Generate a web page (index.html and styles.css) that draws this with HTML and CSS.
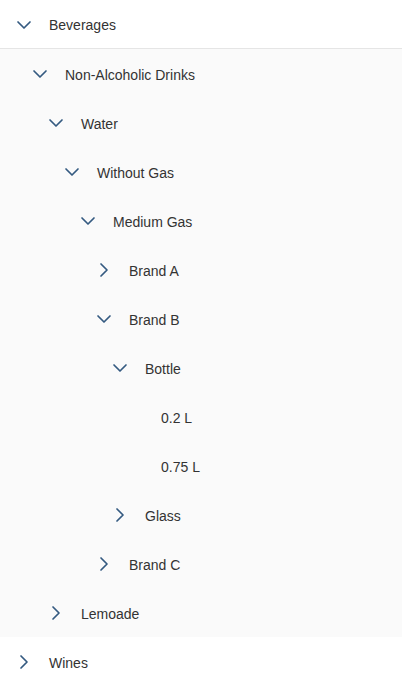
FILE: index.html
```html
<!DOCTYPE html>
<html lang="en">
<head>
    <meta charset="UTF-8">
    <meta name="viewport" content="width=device-width, initial-scale=1.0">
    <title>Tree</title>
    <link rel="stylesheet" href="styles.css">
</head>
<body>
    <ul class="tree">
        <li class="node">
            <div class="row lvl-0"><svg class="chev" viewBox="0 0 16 16"><path d="M2 5 L8 11 L14 5"/></svg><span class="label">Beverages</span></div>
            <ul class="children">
                <li><div class="row lvl-1"><svg class="chev" viewBox="0 0 16 16"><path d="M2 5 L8 11 L14 5"/></svg><span class="label">Non-Alcoholic Drinks</span></div></li>
                <li><div class="row lvl-2"><svg class="chev" viewBox="0 0 16 16"><path d="M2 5 L8 11 L14 5"/></svg><span class="label">Water</span></div></li>
                <li><div class="row lvl-3"><svg class="chev" viewBox="0 0 16 16"><path d="M2 5 L8 11 L14 5"/></svg><span class="label">Without Gas</span></div></li>
                <li><div class="row lvl-4"><svg class="chev" viewBox="0 0 16 16"><path d="M2 5 L8 11 L14 5"/></svg><span class="label">Medium Gas</span></div></li>
                <li><div class="row lvl-5"><svg class="chev" viewBox="0 0 16 16"><path d="M5 2 L11 8 L5 14"/></svg><span class="label">Brand A</span></div></li>
                <li><div class="row lvl-5"><svg class="chev" viewBox="0 0 16 16"><path d="M2 5 L8 11 L14 5"/></svg><span class="label">Brand B</span></div></li>
                <li><div class="row lvl-6"><svg class="chev" viewBox="0 0 16 16"><path d="M2 5 L8 11 L14 5"/></svg><span class="label">Bottle</span></div></li>
                <li><div class="row lvl-7"><span class="leaf"></span><span class="label">0.2 L</span></div></li>
                <li><div class="row lvl-7"><span class="leaf"></span><span class="label">0.75 L</span></div></li>
                <li><div class="row lvl-6"><svg class="chev" viewBox="0 0 16 16"><path d="M5 2 L11 8 L5 14"/></svg><span class="label">Glass</span></div></li>
                <li><div class="row lvl-5"><svg class="chev" viewBox="0 0 16 16"><path d="M5 2 L11 8 L5 14"/></svg><span class="label">Brand C</span></div></li>
                <li><div class="row lvl-2"><svg class="chev" viewBox="0 0 16 16"><path d="M5 2 L11 8 L5 14"/></svg><span class="label">Lemoade</span></div></li>
            </ul>
        </li>
        <li class="node">
            <div class="row lvl-0"><svg class="chev" viewBox="0 0 16 16"><path d="M5 2 L11 8 L5 14"/></svg><span class="label">Wines</span></div>
        </li>
    </ul>
</body>
</html>
```

FILE: styles.css
```css
body {
    margin: 0;
    padding: 0;
    background-color: #fff;
    font-family: "Liberation Sans", Arial, sans-serif;
    font-size: 14px;
    color: #333;
}
.tree, .children {
    list-style: none;
    margin: 0;
    padding: 0;
}
.node > .row {
    background-color: #fff;
}
.node:first-child > .row {
    border-bottom: 1px solid #e5e5e5;
}
.children {
    background-color: #fafafa;
}
.row {
    display: flex;
    align-items: center;
    height: 49px;
    padding-left: 16px;
    box-sizing: border-box;
}
.label {
    padding-top: 2px;
}
.chev, .leaf {
    width: 16px;
    height: 16px;
    margin-right: 17px;
    flex-shrink: 0;
}
.chev {
    margin-top: 1px;
}
.chev path {
    fill: none;
    stroke: #345a80;
    stroke-width: 1.7;
    stroke-linecap: round;
    stroke-linejoin: round;
}
.lvl-1 { padding-left: 32px; }
.lvl-2 { padding-left: 48px; }
.lvl-3 { padding-left: 64px; }
.lvl-4 { padding-left: 80px; }
.lvl-5 { padding-left: 96px; }
.lvl-6 { padding-left: 112px; }
.lvl-7 { padding-left: 128px; }
```
